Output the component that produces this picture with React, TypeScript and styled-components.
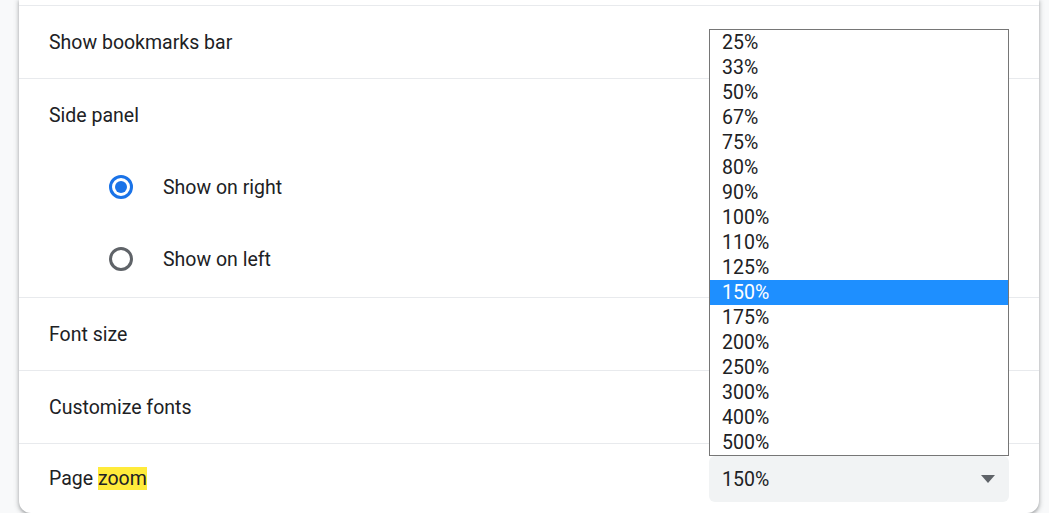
import React from 'react';
import styled, { createGlobalStyle } from 'styled-components';

const GlobalStyle = createGlobalStyle`
	html, body {
		margin: 0;
		padding: 0;
		background-color: #f8f9fa;
		font-family: Roboto, 'Liberation Sans', Arial, sans-serif;
		color: #202124;
		overflow: hidden;
	}
`;

const Page = styled.div`
	height: 513px;
	padding-left: 19px;
	overflow: hidden;
`;

const Card = styled.div`
	width: 1020px;
	height: 513px;
	box-sizing: border-box;
	padding-top: 5px;
	background-color: white;
	border-radius: 0 0 12px 12px;
	box-shadow: 0 1.5px 3px 0 rgba(60, 64, 67, 0.3), 0 1.5px 4.5px 1.5px rgba(60, 64, 67, 0.15);
	display: flex;
	flex-direction: column;
`;

const Row = styled.div<{ $h?: number }>`
	border-top: 1px solid #e8eaed;
	height: ${(p) => p.$h ?? 72}px;
	padding: 0 30px;
	display: flex;
	align-items: center;
	justify-content: space-between;
	font-size: 19.5px;
	flex-shrink: 0;
`;

const Section = styled.div`
	border-top: 1px solid #e8eaed;
	padding-bottom: 2px;
	display: flex;
	flex-direction: column;
`;

const SectionTitle = styled.div`
	height: 72px;
	padding: 0 30px;
	display: flex;
	align-items: center;
	font-size: 19.5px;
`;

const RadioRow = styled.label`
	height: 72px;
	padding-left: 90px;
	display: flex;
	align-items: center;
	gap: 30px;
	font-size: 19.5px;
`;

const RadioDot = styled.span<{ $checked?: boolean }>`
	width: 24px;
	height: 24px;
	box-sizing: border-box;
	border-radius: 50%;
	border: 3px solid ${(p) => (p.$checked ? '#1a73e8' : '#5f6368')};
	display: flex;
	align-items: center;
	justify-content: center;
	&::after {
		content: '';
		width: 12px;
		height: 12px;
		border-radius: 50%;
		background-color: ${(p) => (p.$checked ? '#1a73e8' : 'transparent')};
	}
`;

const Highlight = styled.mark`
	background-color: #ffeb3b;
	color: inherit;
`;

const SelectWrap = styled.div`
	position: relative;
	width: 300px;
`;

const SelectBox = styled.div`
	height: 46px;
	border-radius: 6px;
	background-color: #f1f3f4;
	display: flex;
	align-items: center;
	justify-content: space-between;
	padding: 0 12px 0 13px;
	font-size: 19.5px;
	margin-top: 1px;
`;

const Arrow = styled.span`
	width: 0;
	height: 0;
	border-left: 7.5px solid transparent;
	border-right: 7.5px solid transparent;
	border-top: 8px solid #5f6368;
	margin-right: 2px;
`;

const OptionList = styled.div`
	position: absolute;
	left: 0;
	bottom: calc(100% - 1px);
	width: 300px;
	box-sizing: border-box;
	border: 1px solid #767676;
	background-color: white;
	display: flex;
	flex-direction: column;
`;

const Option = styled.div<{ $active?: boolean }>`
	height: 25px;
	line-height: 25px;
	padding-left: 12px;
	font-size: 19.5px;
	background-color: ${(p) => (p.$active ? '#1e8fff' : 'white')};
	color: ${(p) => (p.$active ? 'white' : '#202124')};
`;

const zoomLevels = ['25%', '33%', '50%', '67%', '75%', '80%', '90%', '100%', '110%', '125%', '150%', '175%', '200%', '250%', '300%', '400%', '500%'];

export default function App() {
	const current = '150%';
	return (
		<>
			<GlobalStyle />
			<Page>
				<Card>
					<Row>Show bookmarks bar</Row>
					<Section>
						<SectionTitle>Side panel</SectionTitle>
						<RadioRow>
							<RadioDot $checked />
							Show on right
						</RadioRow>
						<RadioRow>
							<RadioDot />
							Show on left
						</RadioRow>
					</Section>
					<Row>Font size</Row>
					<Row>Customize fonts</Row>
					<Row $h={69}>
						<span>
							Page <Highlight>zoom</Highlight>
						</span>
						<SelectWrap>
							<OptionList>
								{zoomLevels.map((z) => (
									<Option key={z} $active={z === current}>
										{z}
									</Option>
								))}
							</OptionList>
							<SelectBox>
								{current}
								<Arrow />
							</SelectBox>
						</SelectWrap>
					</Row>
				</Card>
			</Page>
		</>
	);
}
